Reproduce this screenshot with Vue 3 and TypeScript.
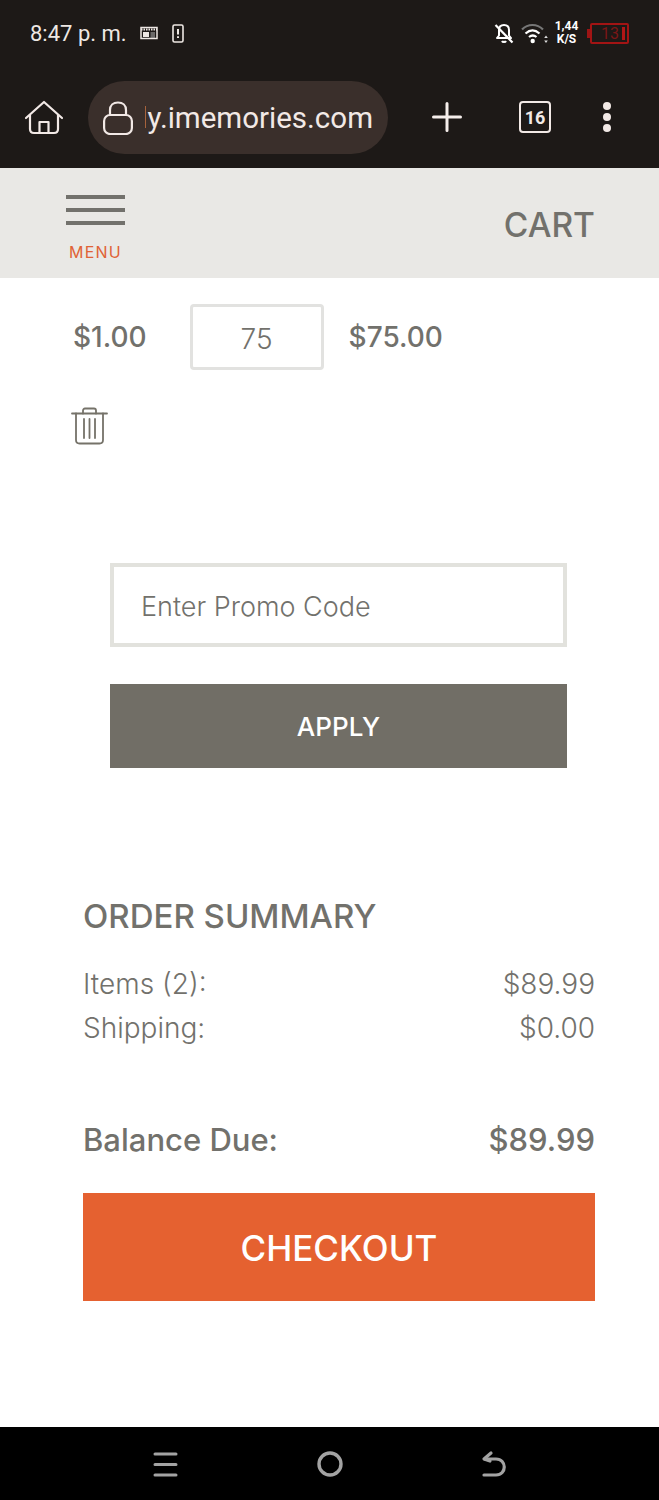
<template>
  <div class="phone">
    <div class="chrome">
      <div class="status">
        <span class="time">8:47 p. m.</span>
        <svg class="st-cal" width="18" height="14" viewBox="0 0 18 14" fill="none">
          <rect x="1" y="1.500" width="16" height="11" fill="none" stroke="#eee8e4" stroke-width="1.500" />
          <path d="M1 3.500h16" stroke="#eee8e4" stroke-width="2" stroke-dasharray="1.500 1" />
          <rect x="3" y="6" width="6" height="5" fill="#eee8e4" />
          <path d="M10.500 7h4.500M10.500 9h4.500M10.500 11h4.500" stroke="#bbb" />
        </svg>
        <svg class="st-alert" width="12" height="19" viewBox="0 0 12 19" fill="none">
          <rect x="1" y="1" width="10" height="17" rx="1.500" stroke="#eee8e4" stroke-width="1.600" />
          <path d="M6 5v5.500M6 12.200v1.800" stroke="#eee8e4" stroke-width="2" />
        </svg>
        <span class="grow"></span>
        <svg class="st-bell" width="20" height="23" viewBox="0 0 20 22" fill="none" stroke="#fff" stroke-width="2">
          <path d="M5 7.500c0-3 2-5 5-5s5 2 5 5v5.500l2 2.500H3l2-2.500z" stroke-linejoin="round" />
          <path d="M8 18.500c.5 1.200 3.500 1.200 4 0" />
          <path d="M1.500 2.500 18.500 20" stroke-width="2.200" />
        </svg>
        <svg class="st-wifi" width="28" height="22" viewBox="0 0 28 22" fill="none">
          <path d="M1 7.500c6-6 15-6 21 0" stroke="#777" stroke-width="2.200" />
          <path d="M4.500 11.500c4.500-4 9.500-4 14 0" stroke="#fff" stroke-width="2.200" />
          <path d="M8 15c2.500-2 5-2 7.500 0" stroke="#fff" stroke-width="2.200" />
          <circle cx="11.700" cy="19" r="2.200" fill="#fff" />
          <path d="m25 13.500 1.800 2.500h-3.600zM25 21l-1.800-2.500h3.600z" fill="#ddd" />
        </svg>
        <span class="speed"><b>1,44</b><b>K/S</b></span>
        <div class="battery">
          <span class="bat-cap"></span>
          <div class="bat-body"><span>13</span><i></i></div>
        </div>
      </div>
      <div class="browser">
        <svg class="home" width="40" height="36" viewBox="0 0 40 36" fill="none" stroke="#f2e9e6" stroke-width="2.200" stroke-linejoin="round" stroke-linecap="round">
          <path d="M2 18 20 2l18 16" />
          <path d="M6 15v14c0 2.500 1.500 4 4 4h20c2.500 0 4-1.500 4-4V15" />
          <path d="M15.500 33V22h9v11" />
        </svg>
        <div class="url">
          <svg width="30" height="34" viewBox="0 0 30 34" fill="none" stroke="#f2e9e6" stroke-width="2.200">
            <rect x="1.100" y="14" width="27.800" height="19" rx="6" />
            <path d="M7 14V9c0-4.500 3.200-7.500 8-7.500s8 3 8 7.500v5" />
          </svg>
          <div class="url-text"><span>ly.imemories.com</span></div>
        </div>
        <svg class="plus" width="30" height="30" viewBox="0 0 30 30" stroke="#f5eeeb" stroke-width="3" stroke-linecap="round">
          <path d="M1.500 15h27M15 1.500v27" />
        </svg>
        <div class="tabs">16</div>
        <div class="dots"><i></i><i></i><i></i></div>
      </div>
    </div>

    <header class="site-head">
      <div class="menu">
        <div class="burger"><i></i><i></i><i></i></div>
        <span class="menu-label">MENU</span>
      </div>
      <h1>CART</h1>
    </header>

    <main class="content">
      <div class="line-item">
        <span class="price">$1.00</span>
        <div class="qty">75</div>
        <span class="price">$75.00</span>
      </div>
      <svg class="trash" width="37" height="38" viewBox="0 0 37 38" fill="none" stroke="#757269" stroke-width="1.800" stroke-linecap="round" stroke-linejoin="round">
        <path d="M1 6.500h35" />
        <path d="M12 6.500V3.500c0-1.200.8-2 2-2h9c1.200 0 2 .8 2 2v3" />
        <path d="M5 6.500V33c0 2 1.500 3.500 3.500 3.500h20c2 0 3.500-1.500 3.500-3.500V6.500" />
        <path d="M13 12v19M18.500 12v19M24 12v19" />
      </svg>

      <div class="promo">
        <div class="promo-input">Enter Promo Code</div>
        <button class="apply" type="button">APPLY</button>
      </div>

      <section class="summary">
        <h2>ORDER SUMMARY</h2>
        <div class="row" v-for="r in rows" :key="r.label">
          <span>{{ r.label }}</span><span>{{ r.value }}</span>
        </div>
        <div class="row due"><span>Balance Due:</span><span>$89.99</span></div>
        <button class="checkout" type="button">CHECKOUT</button>
      </section>
    </main>

    <nav class="android">
      <svg width="26" height="26" viewBox="0 0 26 26" stroke="#a3a3a3" stroke-width="3" stroke-linecap="round">
        <path d="M2 3h21M2 13.500h21M2 24h21" />
      </svg>
      <svg width="26" height="26" viewBox="0 0 26 26" fill="none" stroke="#a3a3a3" stroke-width="3.400">
        <circle cx="13" cy="13" r="11" />
      </svg>
      <svg width="26" height="28" viewBox="0 0 26 28" fill="none" stroke="#a3a3a3" stroke-width="3.200" stroke-linecap="round">
        <path d="M3 25h12c11 0 11-16 0-16H4" />
        <path d="M10 3 3 9l6 2" stroke-linejoin="round" />
      </svg>
    </nav>
  </div>
</template>

<script setup lang="ts">
interface SummaryRow {
  label: string;
  value: string;
}

const rows: SummaryRow[] = [
  { label: 'Items (2):', value: '$89.99' },
  { label: 'Shipping:', value: '$0.00' }
];
</script>

<style>
body {
  margin: 0;
  background: #fff;
}
</style>

<style scoped>
.phone {
  width: 659px;
  height: 1500px;
  display: flex;
  flex-direction: column;
  overflow: hidden;
  font-family: "Inter", "Liberation Sans", sans-serif;
  color: #72716c;
}

.chrome {
  height: 168px;
  background: #1d1917;
  box-sizing: border-box;
}

.status {
  height: 66px;
  display: flex;
  align-items: center;
  padding: 0 30px;
  color: #eee8e4;
}

.time {
  font-family: "Roboto", sans-serif;
  font-size: 22px;
  margin-right: 13px;
}

.st-cal {
  margin-right: 14px;
}

.grow {
  flex: 1;
}

.st-bell {
  margin-right: 7px;
}

.st-wifi {
  margin-right: 6px;
}

.speed {
  display: flex;
  flex-direction: column;
  align-items: center;
  font-family: "Roboto", sans-serif;
  font-size: 12px;
  line-height: 13px;
  color: #fff;
  margin-right: 9px;
  width: 23px;
}

.battery {
  display: flex;
  align-items: center;
}

.bat-cap {
  width: 3px;
  height: 9px;
  background: #9c1414;
}

.bat-body {
  width: 33px;
  height: 17px;
  border: 2px solid #a31414;
  border-radius: 2px;
  display: flex;
  align-items: center;
  justify-content: flex-end;
  gap: 3px;
  padding-right: 2px;
  color: #7a1616;
  font-family: "Roboto", sans-serif;
  font-size: 16px;
}

.bat-body i {
  width: 3px;
  height: 13px;
  background: #b31616;
}

.browser {
  height: 102px;
  display: flex;
  align-items: flex-start;
  padding-top: 15px;
}

.home {
  margin: 19px 0 0 24px;
  flex-shrink: 0;
}

.url {
  margin-left: 24px;
  width: 300px;
  height: 73px;
  box-sizing: border-box;
  border-radius: 37px;
  background: #3a2f2b;
  display: flex;
  align-items: center;
  padding: 0 15px;
  color: #f2e9e6;
  flex-shrink: 0;
}

.url-text {
  width: 228px;
  margin-left: 12px;
  overflow: hidden;
  display: flex;
  justify-content: flex-end;
  white-space: nowrap;
  font-family: "Roboto", sans-serif;
  font-size: 29.500px;
}

.plus {
  margin: 21px 0 0 44px;
  flex-shrink: 0;
}

.tabs {
  margin: 20px 0 0 57px;
  width: 32px;
  height: 32px;
  box-sizing: border-box;
  border: 2px solid #f2e9e6;
  border-radius: 4px;
  display: flex;
  align-items: center;
  justify-content: center;
  font-family: "Roboto", sans-serif;
  font-weight: 700;
  font-size: 18px;
  color: #f2e9e6;
  flex-shrink: 0;
}

.dots {
  margin: 21px 0 0 52px;
  display: flex;
  flex-direction: column;
  gap: 3px;
}

.dots i {
  width: 8px;
  height: 8px;
  border-radius: 50%;
  background: #f2e9e6;
}

.site-head {
  height: 110px;
  background: #e9e8e5;
  display: flex;
  align-items: center;
  justify-content: space-between;
  padding: 0 64px 0 66px;
  flex-shrink: 0;
}

.menu {
  display: flex;
  flex-direction: column;
  align-items: center;
  gap: 19px;
  width: 59px;
  margin-top: 10px;
}

.burger {
  width: 59px;
  display: flex;
  flex-direction: column;
  gap: 9px;
}

.burger i {
  height: 4px;
  background: #72716c;
}

.menu-label {
  font-size: 16px;
  line-height: 17px;
  letter-spacing: 1.200px;
  color: #e06236;
}

.site-head h1 {
  margin: 3px 0 0;
  font-size: 33.500px;
  font-weight: 500;
}

.content {
  flex: 1;
  display: flex;
  flex-direction: column;
  background: #fff;
}

.line-item {
  display: flex;
  align-items: center;
  margin-top: 26px;
  padding-left: 73px;
}

.price {
  font-size: 28px;
  font-weight: 500;
}

.qty {
  width: 134px;
  height: 66px;
  margin: 0 25px 0 43px;
  padding-top: 3px;
  box-sizing: border-box;
  border: 3px solid #e2e2e0;
  border-radius: 4px;
  display: flex;
  align-items: center;
  justify-content: center;
  font-size: 28px;
  font-weight: 300;
}

.trash {
  margin: 37px 0 0 71px;
}

.promo {
  margin: 118px 92px 0 110px;
  display: flex;
  flex-direction: column;
  gap: 37px;
}

.promo-input {
  height: 84px;
  box-sizing: border-box;
  border: 4px solid #e2e2dd;
  display: flex;
  align-items: center;
  padding: 2px 0 0 27px;
  font-size: 27px;
  font-weight: 300;
}

.apply {
  height: 84px;
  border: 0;
  background: #716e66;
  color: #fff;
  font-family: inherit;
  font-size: 26px;
  font-weight: 500;
}

.summary {
  margin: 128px 64px 0 83px;
}

.summary h2 {
  margin: 0 0 26px;
  font-size: 33px;
  line-height: 40px;
  font-weight: 500;
}

.row {
  display: flex;
  justify-content: space-between;
  font-size: 28px;
  font-weight: 300;
  line-height: 44px;
}

.row.due {
  margin-top: 66px;
  font-size: 31px;
  font-weight: 500;
  line-height: 48px;
}

.checkout {
  width: 100%;
  height: 108px;
  margin-top: 29px;
  padding-top: 2px;
  border: 0;
  background: #e56130;
  color: #fff;
  font-family: inherit;
  font-size: 35px;
  font-weight: 500;
}

.android {
  height: 73px;
  flex-shrink: 0;
  background: #000;
  display: flex;
  align-items: center;
  justify-content: center;
  gap: 138px;
}
</style>
